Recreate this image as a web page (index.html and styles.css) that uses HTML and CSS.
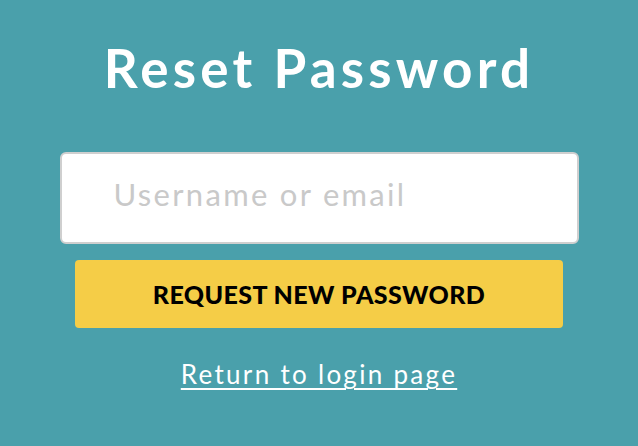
FILE: index.html
```html
<!DOCTYPE html>
<html>
<head>
<meta charset="utf-8">
<link rel="stylesheet" href="styles.css">
</head>
<body>
<main class="reset">
  <h1 class="title">Reset Password</h1>
  <form class="form">
    <input class="field" type="text" placeholder="Username or email">
    <button class="submit" type="button">REQUEST NEW PASSWORD</button>
  </form>
  <a class="back" href="#">Return to login page</a>
</main>
</body>
</html>
```
FILE: styles.css
```css
html, body {
  margin: 0;
  padding: 0;
  height: 100%;
}
body {
  background: #4aa0ab;
  font-family: Lato, "Open Sans", sans-serif;
}
.reset {
  display: flex;
  flex-direction: column;
  align-items: center;
  padding-top: 36px;
}
.title {
  margin: 0;
  color: #fff;
  font-weight: 700;
  font-size: 53px;
  line-height: 64px;
  letter-spacing: 4.2px;
}
.form {
  display: flex;
  flex-direction: column;
  align-items: center;
  gap: 16px;
  margin-top: 52px;
}
.field {
  box-sizing: border-box;
  width: 519px;
  height: 92px;
  border: 2px solid #cfcfcf;
  border-radius: 6px;
  background: #fff;
  padding: 0 0 9px 52px;
  font-family: Lato, sans-serif;
  font-size: 31px;
  letter-spacing: 2.3px;
  color: #333;
  outline: none;
}
.field::placeholder {
  color: #c9c9c9;
}
.submit {
  width: 488px;
  height: 68px;
  border: none;
  border-radius: 4px;
  background: #f5cd47;
  color: #000;
  font-family: Lato, sans-serif;
  font-weight: 900;
  font-size: 25px;
  letter-spacing: 0.4px;
  cursor: pointer;
}
.back {
  margin-top: 30px;
  color: #fff;
  font-size: 26px;
  text-decoration: underline;
  text-decoration-thickness: 2px;
  text-underline-offset: 4px;
  letter-spacing: 2.3px;
}
```
